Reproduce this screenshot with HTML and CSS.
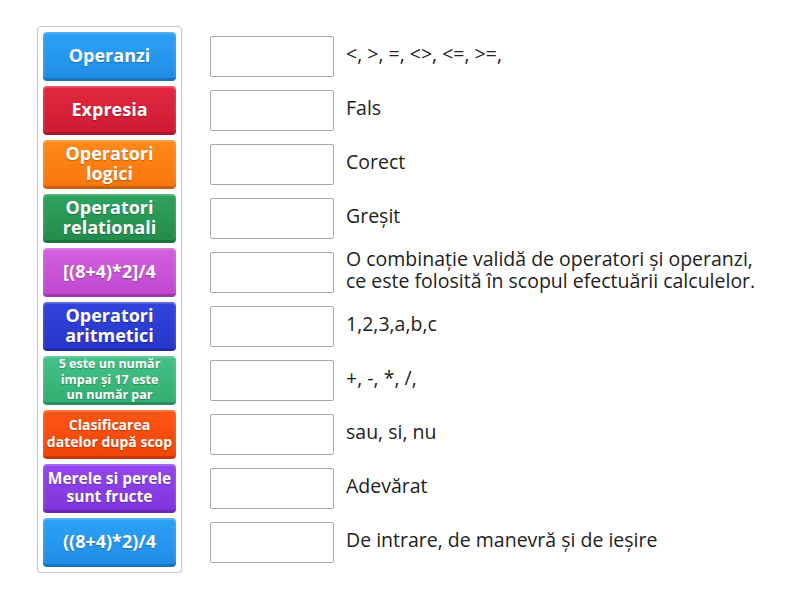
FILE: index.html
```html
<!DOCTYPE html>
<html lang="ro">
<head>
<meta charset="utf-8">
<title>Potrivire</title>
<link rel="stylesheet" href="styles.css">
</head>
<body>
<div class="page">
  <div class="cards">
    <div class="card c-blue">Operanzi</div>
    <div class="card c-red">Expresia</div>
    <div class="card c-orange">Operatori logici</div>
    <div class="card c-green">Operatori relationali</div>
    <div class="card c-pink">[(8+4)*2]/4</div>
    <div class="card c-indigo">Operatori aritmetici</div>
    <div class="card c-teal small">5 este un număr impar și 17 este un număr par</div>
    <div class="card c-flame mid">Clasificarea datelor după scop</div>
    <div class="card c-purple mid2">Merele si perele sunt fructe</div>
    <div class="card c-blue">((8+4)*2)/4</div>
  </div>
  <div class="rows">
    <div class="row"><div class="slot"></div><div class="label">&lt;, &gt;, =, &lt;&gt;, &lt;=, &gt;=,</div></div>
    <div class="row"><div class="slot"></div><div class="label">Fals</div></div>
    <div class="row"><div class="slot"></div><div class="label">Corect</div></div>
    <div class="row"><div class="slot"></div><div class="label">Greșit</div></div>
    <div class="row"><div class="slot"></div><div class="label">O combinaţie validă de operatori şi operanzi,<br>ce este folosită în scopul efectuării calculelor.</div></div>
    <div class="row"><div class="slot"></div><div class="label">1,2,3,a,b,c</div></div>
    <div class="row"><div class="slot"></div><div class="label">+, -, *, /,</div></div>
    <div class="row"><div class="slot"></div><div class="label">sau, si, nu</div></div>
    <div class="row"><div class="slot"></div><div class="label">Adevărat</div></div>
    <div class="row"><div class="slot"></div><div class="label">De intrare, de manevră și de ieșire</div></div>
  </div>
</div>
</body>
</html>
```
FILE: styles.css
```css
html, body {
  margin: 0;
  padding: 0;
  background: #fff;
  font-family: "Open Sans", "Liberation Sans", sans-serif;
}
.page {
  display: flex;
  align-items: flex-start;
  padding: 26px 0 0 37px;
}
.cards {
  width: 133px;
  padding: 5px;
  border: 1px solid #c8c8c8;
  border-radius: 4px;
  display: flex;
  flex-direction: column;
  gap: 5px;
  box-shadow: 0 1px 2px rgba(0,0,0,0.12);
}
.card {
  height: 49px;
  box-sizing: border-box;
  border-radius: 4px;
  display: flex;
  align-items: center;
  justify-content: center;
  text-align: center;
  color: #fff;
  font-weight: 700;
  font-size: 18px;
  line-height: 20px;
  padding: 0 3px 3px;
  text-shadow: 0 1px 1px rgba(0,0,0,0.25);
  box-shadow: inset 0 -3px 0 rgba(0,0,0,0.18), inset 0 2px 0 rgba(255,255,255,0.18), inset 2px 0 0 rgba(255,255,255,0.08), inset -2px 0 0 rgba(255,255,255,0.08);
}
.card.small { font-size: 12.5px; line-height: 15.5px; padding: 0 8px 2px; }
.card.mid { font-size: 14px; line-height: 17px; }
.card.mid2 { font-size: 15.5px; line-height: 18px; }
.c-blue { background: linear-gradient(#2ea3f6, #1e8be6); }
.c-red { background: linear-gradient(#e22942, #cc1a31); }
.c-orange { background: linear-gradient(#ff8a1c, #f8750a); }
.c-green { background: linear-gradient(#2fa460, #238a4b); }
.c-pink { background: linear-gradient(#d262de, #bf46cf); }
.c-indigo { background: linear-gradient(#3244dc, #2636c8); }
.c-teal { background: linear-gradient(#44c287, #33ad72); }
.c-flame { background: linear-gradient(#ff5616, #ee4306); }
.c-purple { background: linear-gradient(#9347ec, #7f33dc); }
.rows {
  margin-left: 28px;
  padding-top: 3px;
  display: flex;
  flex-direction: column;
}
.row {
  height: 54px;
  display: flex;
  align-items: center;
}
.slot {
  width: 124px;
  height: 41px;
  box-sizing: border-box;
  border: 1px solid #a9a9a9;
  border-radius: 2px;
  background: #fff;
  flex: none;
}
.label {
  margin-left: 12px;
  margin-bottom: 5px;
  font-size: 19.5px;
  line-height: 22px;
  color: #222;
}
```
